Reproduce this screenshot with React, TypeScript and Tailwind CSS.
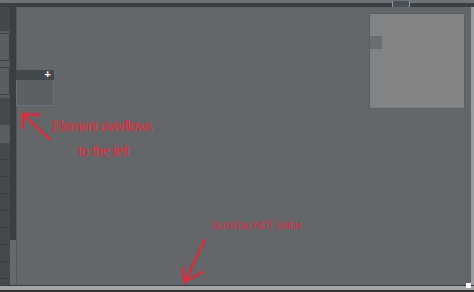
export default function App() {
  const rows = [0, 1, 2, 3, 4, 5, 6, 7];

  return (
    <div
      className="relative flex h-[292px] w-[474px] flex-col overflow-hidden bg-[#63676a]"
      style={{ fontFamily: '"Liberation Sans", Arial, sans-serif' }}
    >
      {/* Top strip */}
      <div className="h-[3px] bg-[#707376]" />
      <div className="relative h-[4px] bg-[#3d4043]">
        <div className="absolute left-[392px] top-[-2px] h-[6px] w-[18px] border-x border-[#7f9fc0] bg-[#4a4f55]" />
      </div>

      <div className="flex flex-1">
        {/* Left panel strip */}
        <div className="flex w-[10px] shrink-0 flex-col bg-[#45484b]">
          <div className="h-[24px] bg-[#45484b]" />
          <div className="flex h-[67px] flex-col gap-[6px] bg-[#595c5f] py-[2px]">
            <div className="h-[28px] rounded-r-[3px] border border-l-0 border-[#3e4144] bg-[#5b5e61]" />
            <div className="h-[28px] rounded-r-[3px] border border-l-0 border-[#3e4144] bg-[#5b5e61]" />
          </div>
          <div className="h-[27px] bg-[#46494c]" />
          <div className="h-[18px] bg-[#5a5d60]" />
          <div className="flex flex-1 flex-col">
            {rows.map((r) => (
              <div key={r} className="h-[17px] border-b border-[#3a3d40] bg-[#46494c]" />
            ))}
          </div>
        </div>

        {/* Vertical scrollbar */}
        <div className="flex w-[6px] shrink-0 flex-col bg-[#3b3e41]">
          <div className="flex-1" />
          <div className="h-[45px] bg-[#66696c]" />
        </div>

        {/* Canvas */}
        <div className="relative flex-1 border-l border-[#55585b] bg-[#63676a]">
          {/* Overflowing node */}
          <div className="absolute left-[-1px] top-[63px] w-[38px]">
            <div className="relative h-[10px] bg-[#45484b]">
              <span className="absolute right-[3px] top-[-3px] text-[11px] font-bold leading-[14px] text-white">+</span>
            </div>
            <div className="h-[26px] border border-t-0 border-[#6c6e82] bg-[#5d6063]" />
          </div>

          {/* Top right node */}
          <div className="absolute left-[352px] top-[6px] h-[96px] w-[96px] border border-[#5b5e61] bg-[#828385]">
            <div className="mt-[22px] h-[13px] w-[12px] bg-[#6b6d70]" />
          </div>

          {/* Annotations */}
          <div className="absolute left-[35px] top-[111px] text-[14px] leading-[16px] tracking-[-0.85px] text-[#e0303e]">
            Element overflows
          </div>
          <div className="absolute left-[61px] top-[136px] text-[14px] leading-[16px] tracking-[-0.6px] text-[#e0303e]">
            to the left
          </div>
          <div className="absolute left-[195px] top-[213px] text-[10px] leading-[12px] tracking-[-0.3px] text-[#d8304a]">
            Scroll bar NOT visible
          </div>
        </div>

        {/* Right edge */}
        <div className="w-[3px] shrink-0 bg-[#9c9ea0]" />
      </div>

      {/* Bottom bar */}
      <div className="h-[1px] bg-[#3a3d40]" />
      <div className="relative h-[6px] bg-[#a3a5a7]">
        <div className="absolute bottom-0 left-0 h-[2px] w-full bg-[#2f3133]" />
        <div className="absolute left-[466px] top-[-3px] h-[5px] w-[5px] bg-white" />
      </div>

      {/* Arrows overlay */}
      <svg className="pointer-events-none absolute left-0 top-0" width="474" height="292">
        <g stroke="#e02a3c" strokeWidth="2.5" strokeLinecap="round" fill="none">
          <path d="M50 139 L23 114" />
          <path d="M23 114 L23 128" />
          <path d="M23 114 L40 115" />
          <path d="M205 240 L185 282" />
          <path d="M185 282 L183 268" />
          <path d="M185 282 L203 272" />
        </g>
      </svg>
    </div>
  );
}
